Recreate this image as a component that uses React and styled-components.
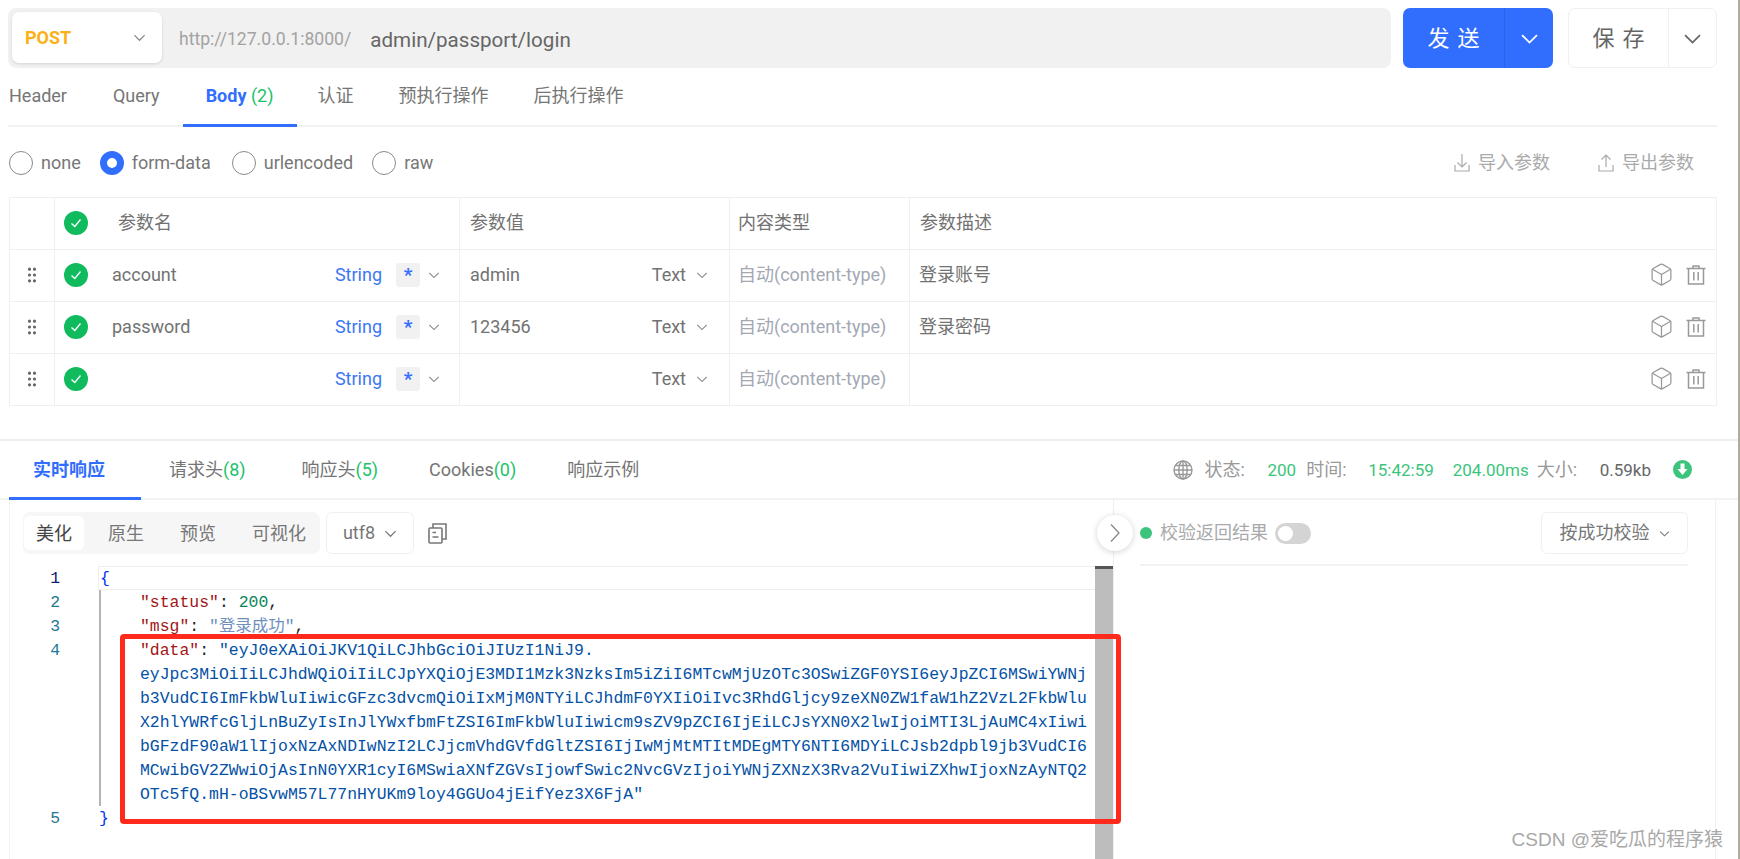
import React from 'react';
import styled, { createGlobalStyle } from 'styled-components';
import { Box, GripVertical } from 'lucide-react';

const GlobalStyle = createGlobalStyle`
  html, body {
    margin: 0;
    padding: 0;
    background: #fff;
  }
  * {
    box-sizing: border-box;
  }
`;

const Page = styled.div`
  position: relative;
  width: 1740px;
  height: 859px;
  overflow: hidden;
  background: #fff;
  border-right: 2px solid #b0aca0;
  font-family: Roboto, "Noto Sans CJK SC", sans-serif;
  font-size: 18px;
  line-height: 24px;
  color: #666;
`;

const Request = styled.section`
  height: 439px;
  padding: 8px 21px 0 8px;
`;

const UrlRow = styled.div`
  display: flex;
  height: 60px;
`;

const UrlBar = styled.div`
  display: flex;
  flex: none;
  align-items: center;
  width: 1383px;
  height: 60px;
  padding-left: 4px;
  background: #f1f1f1;
  border-radius: 8px;
`;

const MethodSelect = styled.div`
  display: flex;
  align-items: center;
  justify-content: space-between;
  width: 150px;
  height: 51px;
  margin-top: -1px;
  padding: 0 16px 0 13px;
  background: #fff;
  border-radius: 7px;
  box-shadow: 0 1px 3px rgba(0, 0, 0, 0.12);
  color: #fbb116;
  font-weight: 700;
`;

const BaseUrl = styled.span`
  margin: 2px 0 0 17px;
  color: #a3a3a3;
  font-size: 17.6px;
`;

const PathUrl = styled.span`
  margin: 3px 0 0 19px;
  color: #666;
  font-size: 20.6px;
`;

const SplitButton = styled.div`
  display: flex;
  flex: none;
  width: ${(p) => p.$width}px;
  height: 60px;
  margin-left: ${(p) => p.$gap}px;
  border-radius: 7px;
  border: ${(p) => (p.$primary ? 'none' : '1px solid #f0f0f0')};
  background: ${(p) => (p.$primary ? '#316efe' : '#fff')};
  color: ${(p) => (p.$primary ? '#fff' : '#666')};
`;

const SplitLabel = styled.div`
  display: flex;
  flex: 1;
  align-items: center;
  justify-content: center;
  padding: 2px 0 0 8px;
  font-size: 22px;
  letter-spacing: 8px;
  border-right: 1px solid ${(p) => (p.$primary ? '#2b63e6' : '#f0f0f0')};
`;

const SplitArrow = styled.div`
  display: flex;
  align-items: center;
  justify-content: center;
  width: ${(p) => p.$width}px;
`;

const Tabs = styled.div`
  display: flex;
  height: 59px;
  border-bottom: 2px solid #f2f2f2;
`;

const Tab = styled.div`
  display: flex;
  align-items: center;
  height: 59px;
  margin-left: ${(p) => p.$shift || 0}px;
  padding: 0 23px 1px;
  white-space: nowrap;
  color: ${(p) => (p.$active ? '#316efe' : '#757575')};
  font-weight: ${(p) => (p.$active ? 700 : 400)};
  border-bottom: 3px solid ${(p) => (p.$active ? '#316efe' : 'transparent')};

  &:first-child {
    padding-left: 1px;
  }
`;

const Count = styled.span`
  color: #1cc26a;
  font-weight: 400;
`;

const BodyOptions = styled.div`
  display: flex;
  align-items: center;
  justify-content: space-between;
  height: 70px;
  padding: 2px 0 0 1px;
`;

const RadioGroup = styled.div`
  display: flex;
  align-items: center;
`;

const Radio = styled.span`
  width: 24px;
  height: 24px;
  margin-right: 8px;
  border-radius: 50%;
  border: ${(p) => (p.$checked ? '7px solid #316efe' : '1px solid #8a8a8a')};
  background: #fff;
`;

const RadioLabel = styled.span`
  margin-right: ${(p) => p.$gap || 19}px;
  color: #777;
`;

const ParamActions = styled.div`
  display: flex;
  gap: 48px;
  margin-right: 23px;
`;

const ParamAction = styled.span`
  display: flex;
  align-items: center;
  gap: 8px;
  color: #aaa;
`;

const ParamTable = styled.div`
  display: grid;
  grid-template-columns: 45px 405px 270px 180px 1fr;
  grid-auto-rows: 52px;
  margin-left: 1px;
  border-top: 1px solid #f0f0f0;
  border-left: 1px solid #f0f0f0;
`;

const Cell = styled.div`
  display: flex;
  align-items: center;
  min-width: 0;
  padding: 0 ${(p) => p.$right || 9}px 2px ${(p) => p.$left || 9}px;
  border-right: 1px solid #f0f0f0;
  border-bottom: 1px solid #f0f0f0;
  color: ${(p) => p.$color || '#727272'};
  justify-content: ${(p) => (p.$center ? 'center' : 'flex-start')};
  white-space: nowrap;
`;

const CheckCircle = styled.span`
  display: flex;
  flex: none;
  align-items: center;
  justify-content: center;
  width: 24px;
  height: 24px;
  border-radius: 50%;
  background: #0fbb5c;
`;

const NameText = styled.span`
  flex: 1;
  margin-left: ${(p) => p.$left}px;
`;

const TypeText = styled.span`
  margin-right: 1px;
  color: #3b78f5;
`;

const RequiredMark = styled.span`
  display: flex;
  align-items: center;
  justify-content: center;
  width: 24px;
  height: 24px;
  margin: 0 8px 0 13px;
  background: #f1f1f1;
  border-radius: 3px;
  color: #316efe;
  font-size: 19px;
  font-weight: 700;
`;

const ValueText = styled.span`
  flex: 1;
`;

const ChevronGap = styled.span`
  width: 10px;
`;

const RowIcons = styled.span`
  display: flex;
  align-items: center;
  gap: 12px;
  margin-left: auto;
  color: #999;
`;

const Response = styled.section`
  height: 420px;
  border-top: 2px solid #eee;
`;

const ResponseHead = styled.div`
  display: flex;
  justify-content: space-between;
  height: 59px;
  padding-left: 9px;
  border-bottom: 2px solid #f2f2f2;
  margin-bottom: -1px;
`;

const ResponseTabs = styled.div`
  display: flex;
`;

const ResponseTab = styled(Tab)`
  padding: 1px 28px 0;

  &:first-child {
    padding: 1px 36px 0 24px;
  }
`;

const Status = styled.div`
  display: flex;
  align-items: center;
  padding-right: 46px;
  color: #999;
`;

const GlobeIcon = styled.svg`
  margin-right: 12px;
`;

const StatusLabel = styled.span`
  width: ${(p) => p.$width}px;
  color: #999;
`;

const StatusValue = styled.span`
  margin-right: ${(p) => p.$right}px;
  color: ${(p) => p.$color || '#3cc47c'};
  font-size: 17px;
`;

const Panels = styled.div`
  display: flex;
  height: 361px;
  margin-left: 9px;
  width: 1707px;
  border-left: 1px solid #f2f2f2;
  border-right: 1px solid #f0f0f0;
`;

const LeftPanel = styled.div`
  display: flex;
  flex: none;
  flex-direction: column;
  width: 1104px;
  border-right: 1px solid #eee;
`;

const Toolbar = styled.div`
  display: flex;
  align-items: center;
  height: 67px;
  padding: 13px 0 12px 13px;
`;

const ViewSwitch = styled.div`
  display: flex;
  align-items: center;
  height: 42px;
  width: 297px;
  padding: 0 1px;
  background: #f6f6f6;
  border-radius: 7px;
`;

const ViewItem = styled.span`
  display: flex;
  align-items: center;
  justify-content: center;
  height: 34px;
  min-width: ${(p) => p.$width}px;
  margin-right: ${(p) => p.$gap}px;
  padding-top: 1px;
  border-radius: 5px;
  background: ${(p) => (p.$active ? '#fff' : 'transparent')};
  color: ${(p) => (p.$active ? '#444' : '#777')};
`;

const OutlineSelect = styled.div`
  display: flex;
  align-items: center;
  justify-content: center;
  gap: 9px;
  height: 42px;
  width: ${(p) => p.$width}px;
  margin-left: ${(p) => p.$left || 0}px;
  border: 1px solid #f0f0f0;
  border-radius: 6px;
  background: #fff;
  color: #777;
`;

const CopyButton = styled.span`
  display: flex;
  margin-left: 14px;
  color: #777;
`;

const Editor = styled.div`
  display: flex;
  flex: 1;
  min-height: 0;
`;

const Gutter = styled.div`
  flex: none;
  width: 88px;
  padding-right: 38px;
  font-family: "Liberation Mono", monospace;
  font-size: 16.4px;
  line-height: 26px;
  text-align: right;
`;

const LineNo = styled.div`
  height: ${(p) => (p.$rows || 1) * 24}px;
  color: ${(p) => (p.$active ? '#0b216f' : '#237893')};
`;

const Code = styled.div`
  flex: 1;
  min-width: 0;
  font-family: "Liberation Mono", "Noto Sans CJK SC", monospace;
  font-size: 16.46px;
  line-height: 26px;
  white-space: pre;
`;

const ActiveLine = styled.div`
  height: 24px;
  border: 1px solid #eee;
  border-right: none;
  padding-left: 1px;
  line-height: 24px;
  color: #0431fa;
`;

const Block = styled.div`
  border-left: 2px solid #b4b4b4;
  margin-left: 1px;
  padding-left: 39px;
`;

const CodeLine = styled.div`
  height: 24px;
  color: #0451a5;
`;

const CloseBrace = styled.div`
  height: 24px;
  padding-left: 1px;
  color: #0431fa;
`;

const Key = styled.span`
  color: #a31515;
`;

const Num = styled.span`
  color: #098658;
`;

const Punct = styled.span`
  color: #222;
`;

const CnString = styled.span`
  color: #6f8fbd;
`;

const ScrollTrack = styled.div`
  flex: none;
  width: 18px;
  background: #bdbdbd;
  border-top: 3px solid #555;
`;

const RightPanel = styled.div`
  flex: 1;
  padding: 13px 27px 0 26px;
`;

const CheckHead = styled.div`
  display: flex;
  align-items: center;
  height: 54px;
  padding-bottom: 10px;
  border-bottom: 2px solid #f2f2f2;
`;

const Dot = styled.span`
  width: 12px;
  height: 12px;
  margin-right: 8px;
  border-radius: 50%;
  background: #3cc47c;
`;

const CheckLabel = styled.span`
  color: #aaa;
`;

const Toggle = styled.span`
  display: flex;
  align-items: center;
  width: 36px;
  height: 21px;
  margin-left: 7px;
  padding-left: 3px;
  border-radius: 11px;
  background: #d4d4d4;

  &::before {
    content: '';
    width: 15px;
    height: 15px;
    border-radius: 50%;
    background: #fff;
  }
`;

const CheckSelect = styled(OutlineSelect)`
  margin-left: auto;
`;

const CollapseButton = styled.span`
  position: absolute;
  left: 1097px;
  top: 515px;
  display: flex;
  align-items: center;
  justify-content: center;
  width: 36px;
  height: 36px;
  border-radius: 50%;
  background: #fff;
  box-shadow: 0 1px 6px rgba(0, 0, 0, 0.18);
  color: #888;
`;

const Highlight = styled.div`
  position: absolute;
  left: 120px;
  top: 634px;
  width: 1001px;
  height: 190px;
  border: 5px solid #ff2a1c;
  border-radius: 4px;
`;

const Watermark = styled.div`
  position: absolute;
  right: 15px;
  top: 828px;
  font-family: "Liberation Sans", "Noto Sans CJK SC", sans-serif;
  font-size: 19px;
  color: #a8a8a8;
`;

const Chevron = ({ size = 14, color = 'currentColor', width = 1.3 }) => (
  <svg width={size} height={size} viewBox="0 0 14 14" fill="none" stroke={color} strokeWidth={width}>
    <path d="M1.5 4.5 L7 10 L12.5 4.5" />
  </svg>
);

const Check = () => (
  <svg width="14" height="14" viewBox="0 0 14 14" fill="none" stroke="#fff" strokeWidth="1.3">
    <path d="M2.5 7.5 L5.8 10.5 L11.5 3.5" />
  </svg>
);

const Trash = () => (
  <svg width="20" height="20" viewBox="0 0 20 20" fill="none" stroke="#999" strokeWidth="1.5">
    <path d="M0.5 3.5 H19.5 M7 3 V1 H13 V3 M2.5 3.5 V19 H17.5 V3.5 M7.8 7 V15.5 M12.2 7 V15.5" />
  </svg>
);

const ImportIcon = ({ up }) => (
  <svg width="16" height="20" viewBox="0 0 16 20" fill="none" stroke="#aaa" strokeWidth="1.2">
    {up ? <path d="M8 14 V2 M3.5 6.5 L8 2 L12.5 6.5" /> : <path d="M8 1 V14 M3.5 9.5 L8 14 L12.5 9.5" />}
    <path d="M1 12 V18 H15 V12" />
  </svg>
);

const CopyIcon = () => (
  <svg width="19" height="21" viewBox="0 0 19 21" fill="none" stroke="currentColor" strokeWidth="1.6">
    <path d="M5 5 V1 H18 V16 H14" />
    <rect x="1" y="5" width="13" height="15" rx="1" />
    <path d="M4.5 9.5 H8 M4.5 14 H10.5" />
  </svg>
);

const DownCircle = () => (
  <svg width="19" height="19" viewBox="0 0 19 19">
    <circle cx="9.5" cy="9.5" r="9.5" fill="#3cc47c" />
    <path d="M7.5 3.5 H11.5 V9 H14.5 L9.5 15 L4.5 9 H7.5 Z" fill="#fff" />
  </svg>
);

const params = [
  { name: 'account', value: 'admin', desc: '登录账号' },
  { name: 'password', value: '123456', desc: '登录密码' },
  { name: '', value: '', desc: '' },
];

const tokenLines = [
  'eyJpc3MiOiIiLCJhdWQiOiIiLCJpYXQiOjE3MDI1Mzk3NzksIm5iZiI6MTcwMjUzOTc3OSwiZGF0YSI6eyJpZCI6MSwiYWNj',
  'b3VudCI6ImFkbWluIiwicGFzc3dvcmQiOiIxMjM0NTYiLCJhdmF0YXIiOiIvc3RhdGljcy9zeXN0ZW1faW1hZ2VzL2FkbWlu',
  'X2hlYWRfcGljLnBuZyIsInJlYWxfbmFtZSI6ImFkbWluIiwicm9sZV9pZCI6IjEiLCJsYXN0X2lwIjoiMTI3LjAuMC4xIiwi',
  'bGFzdF90aW1lIjoxNzAxNDIwNzI2LCJjcmVhdGVfdGltZSI6IjIwMjMtMTItMDEgMTY6NTI6MDYiLCJsb2dpbl9jb3VudCI6',
  'MCwibGV2ZWwiOjAsInN0YXR1cyI6MSwiaXNfZGVsIjowfSwic2NvcGVzIjoiYWNjZXNzX3Rva2VuIiwiZXhwIjoxNzAyNTQ2',
  'OTc5fQ.mH-oBSvwM57L77nHYUKm9loy4GGUo4jEifYez3X6FjA"',
];

const App = () => (
  <Page>
    <GlobalStyle />
    <Request>
      <UrlRow>
        <UrlBar>
          <MethodSelect>
            POST
            <Chevron size={13} color="#888" />
          </MethodSelect>
          <BaseUrl>http://127.0.0.1:8000/</BaseUrl>
          <PathUrl>admin/passport/login</PathUrl>
        </UrlBar>
        <SplitButton $primary $width={150} $gap={12}>
          <SplitLabel $primary>发送</SplitLabel>
          <SplitArrow $width={48}>
            <Chevron size={19} />
          </SplitArrow>
        </SplitButton>
        <SplitButton $width={149} $gap={15}>
          <SplitLabel>保存</SplitLabel>
          <SplitArrow $width={47}>
            <Chevron size={19} />
          </SplitArrow>
        </SplitButton>
      </UrlRow>

      <Tabs>
        <Tab>Header</Tab>
        <Tab>Query</Tab>
        <Tab $active>
          Body&nbsp;<Count>(2)</Count>
        </Tab>
        <Tab $shift={-2}>认证</Tab>
        <Tab $shift={-1}>预执行操作</Tab>
        <Tab $shift={-1}>后执行操作</Tab>
      </Tabs>

      <BodyOptions>
        <RadioGroup>
          <Radio />
          <RadioLabel>none</RadioLabel>
          <Radio $checked />
          <RadioLabel $gap={21}>form-data</RadioLabel>
          <Radio />
          <RadioLabel>urlencoded</RadioLabel>
          <Radio />
          <RadioLabel>raw</RadioLabel>
        </RadioGroup>
        <ParamActions>
          <ParamAction>
            <ImportIcon />
            导入参数
          </ParamAction>
          <ParamAction>
            <ImportIcon up />
            导出参数
          </ParamAction>
        </ParamActions>
      </BodyOptions>

      <ParamTable>
        <Cell />
        <Cell>
          <CheckCircle>
            <Check />
          </CheckCircle>
          <NameText $left={30}>参数名</NameText>
        </Cell>
        <Cell $left={10}>参数值</Cell>
        <Cell $left={8}>内容类型</Cell>
        <Cell $left={10}>参数描述</Cell>
        {params.map((row, i) => (
          <React.Fragment key={i}>
            <Cell $center $left={1} $right={1} $color="#666">
              <GripVertical size={20} strokeWidth={1.8} />
            </Cell>
            <Cell $right={19}>
              <CheckCircle>
                <Check />
              </CheckCircle>
              <NameText $left={24}>{row.name}</NameText>
              <TypeText>String</TypeText>
              <RequiredMark>*</RequiredMark>
              <Chevron size={12} color="#888" />
            </Cell>
            <Cell $left={10} $right={21}>
              <ValueText>{row.value}</ValueText>
              <span>Text</span>
              <ChevronGap />
              <Chevron size={12} color="#888" />
            </Cell>
            <Cell $left={8} $right={1} $color="#a3a8b3">自动(content-type)</Cell>
            <Cell $right={10}>
              {row.desc}
              <RowIcons>
                <Box size={25} strokeWidth={1.2} />
                <Trash />
              </RowIcons>
            </Cell>
          </React.Fragment>
        ))}
      </ParamTable>
    </Request>

    <Response>
      <ResponseHead>
        <ResponseTabs>
          <ResponseTab $active>实时响应</ResponseTab>
          <ResponseTab>请求头<Count>(8)</Count></ResponseTab>
          <ResponseTab>响应头<Count>(5)</Count></ResponseTab>
          <ResponseTab $shift={-5}>Cookies<Count>(0)</Count></ResponseTab>
          <ResponseTab $shift={-5}>响应示例</ResponseTab>
        </ResponseTabs>
        <Status>
          <GlobeIcon width="20" height="20" viewBox="0 0 20 20" fill="none" stroke="#999" strokeWidth="1.4">
            <circle cx="10" cy="10" r="9" />
            <ellipse cx="10" cy="10" rx="4.2" ry="9" />
            <path d="M10 1 V19 M1 10 H19 M2.2 5.5 H17.8 M2.2 14.5 H17.8" />
          </GlobeIcon>
          <StatusLabel $width={63}>状态:</StatusLabel>
          <StatusValue $right={10}>200</StatusValue>
          <StatusLabel $width={62}>时间:</StatusLabel>
          <StatusValue $right={19}>15:42:59</StatusValue>
          <StatusValue $right={8}>204.00ms</StatusValue>
          <StatusLabel $width={63}>大小:</StatusLabel>
          <StatusValue $right={22} $color="#666">0.59kb</StatusValue>
          <DownCircle />
        </Status>
      </ResponseHead>

      <Panels>
        <LeftPanel>
          <Toolbar>
            <ViewSwitch>
              <ViewItem $active $width={60} $gap={12}>美化</ViewItem>
              <ViewItem $width={60} $gap={12}>原生</ViewItem>
              <ViewItem $width={60} $gap={12}>预览</ViewItem>
              <ViewItem $width={78} $gap={0}>可视化</ViewItem>
            </ViewSwitch>
            <OutlineSelect $width={88} $left={6}>
              utf8
              <Chevron size={13} color="#777" />
            </OutlineSelect>
            <CopyButton>
              <CopyIcon />
            </CopyButton>
          </Toolbar>
          <Editor>
            <Gutter>
              <LineNo $active>1</LineNo>
              <LineNo>2</LineNo>
              <LineNo>3</LineNo>
              <LineNo $rows={7}>4</LineNo>
              <LineNo>5</LineNo>
            </Gutter>
            <Code>
              <ActiveLine>{'{'}</ActiveLine>
              <Block>
                <CodeLine>
                  <Key>"status"</Key><Punct>: </Punct><Num>200</Num><Punct>,</Punct>
                </CodeLine>
                <CodeLine>
                  <Key>"msg"</Key><Punct>: </Punct><CnString>"登录成功"</CnString><Punct>,</Punct>
                </CodeLine>
                <CodeLine>
                  <Key>"data"</Key><Punct>: </Punct>"eyJ0eXAiOiJKV1QiLCJhbGciOiJIUzI1NiJ9.
                </CodeLine>
                {tokenLines.map((line) => (
                  <CodeLine key={line}>{line}</CodeLine>
                ))}
              </Block>
              <CloseBrace>{'}'}</CloseBrace>
            </Code>
            <ScrollTrack />
          </Editor>
        </LeftPanel>
        <RightPanel>
          <CheckHead>
            <Dot />
            <CheckLabel>校验返回结果</CheckLabel>
            <Toggle />
            <CheckSelect $width={147}>
              按成功校验
              <Chevron size={11} color="#777" />
            </CheckSelect>
          </CheckHead>
        </RightPanel>
      </Panels>
    </Response>

    <CollapseButton>
      <svg width="12" height="20" viewBox="0 0 12 20" fill="none" stroke="currentColor" strokeWidth="1.3">
        <path d="M2 1.5 L10 10 L2 18.5" />
      </svg>
    </CollapseButton>
    <Highlight />
    <Watermark>CSDN @爱吃瓜的程序猿</Watermark>
  </Page>
);

export default App;
